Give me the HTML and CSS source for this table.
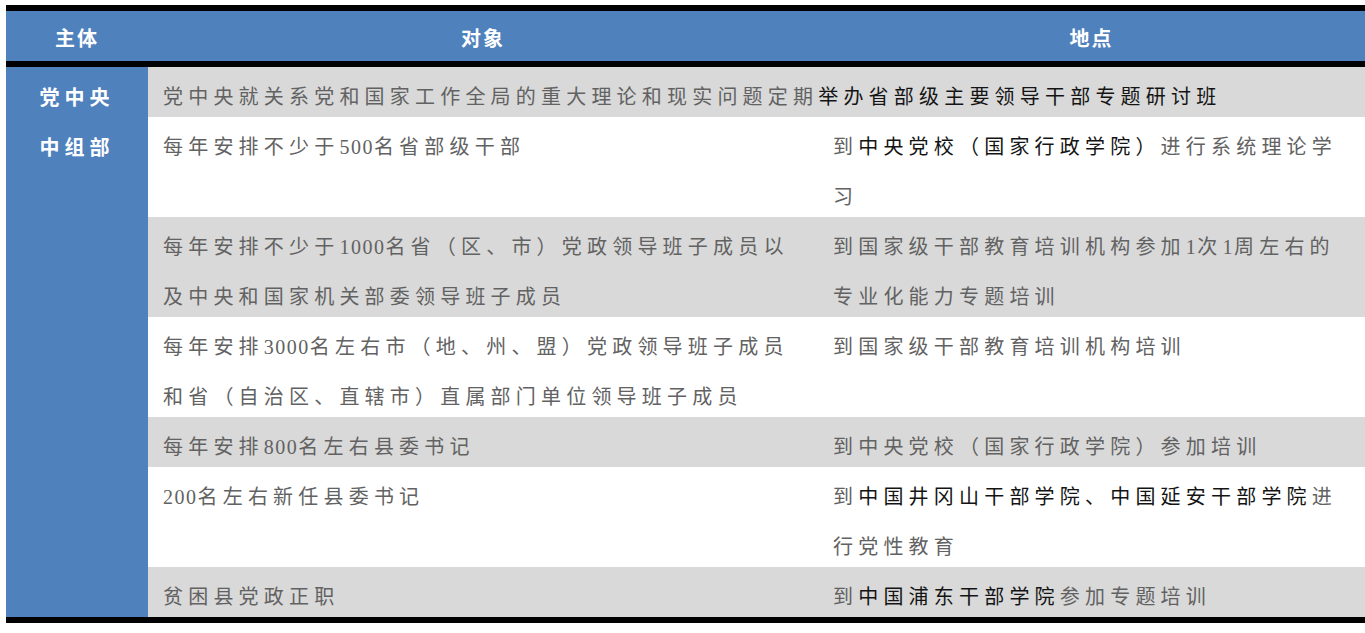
FILE: index.html
```html
<!DOCTYPE html>
<html lang="zh-CN">
<head>
<meta charset="utf-8">
<title>干部培训</title>
<link rel="stylesheet" href="styles.css">
</head>
<body>
<table class="tbl">
  <colgroup>
    <col class="c1">
    <col class="c2">
    <col class="c3">
  </colgroup>
  <thead>
    <tr class="head">
      <th>主体</th>
      <th>对象</th>
      <th>地点</th>
    </tr>
  </thead>
  <tbody>
    <tr class="gray">
      <td class="subject" rowspan="7"><div class="in">党中央<br>中组部</div></td>
      <td colspan="2"><div class="in">党中央就关系党和国家工作全局的重大理论和现实问题定期<b>举办省部级主要领导干部专题研讨班</b></div></td>
    </tr>
    <tr class="white">
      <td><div class="in">每年安排不少于<span class="num">500</span>名省部级干部</div></td>
      <td><div class="in">到<b>中央党校（国家行政学院）</b>进行系统理论学<br>习</div></td>
    </tr>
    <tr class="gray">
      <td><div class="in">每年安排不少于<span class="num">1000</span>名省（区、市）党政领导班子成员以<br>及中央和国家机关部委领导班子成员</div></td>
      <td><div class="in">到国家级干部教育培训机构参加<span class="num">1</span>次<span class="num">1</span>周左右的<br>专业化能力专题培训</div></td>
    </tr>
    <tr class="white">
      <td><div class="in">每年安排<span class="num">3000</span>名左右市（地、州、盟）党政领导班子成员<br>和省（自治区、直辖市）直属部门单位领导班子成员</div></td>
      <td><div class="in">到国家级干部教育培训机构培训</div></td>
    </tr>
    <tr class="gray">
      <td><div class="in">每年安排<span class="num">800</span>名左右县委书记</div></td>
      <td><div class="in">到中央党校（国家行政学院）参加培训</div></td>
    </tr>
    <tr class="white">
      <td><div class="in"><span class="num">200</span>名左右新任县委书记</div></td>
      <td><div class="in">到<b>中国井冈山干部学院、中国延安干部学院</b>进<br>行党性教育</div></td>
    </tr>
    <tr class="gray">
      <td><div class="in">贫困县党政正职</div></td>
      <td><div class="in">到<b>中国浦东干部学院</b>参加专题培训</div></td>
    </tr>
  </tbody>
</table>
</body>
</html>
```

FILE: styles.css
```css
html, body {
  margin: 0;
  padding: 0;
  background: #ffffff;
}

.tbl {
  margin: 5px 0 0 6px;
  width: 1359px;
  border-collapse: collapse;
  table-layout: fixed;
  font-family: "Liberation Serif", "Noto Sans CJK SC", serif;
  font-size: 20px;
  border-top: 6px solid #000;
  border-bottom: 6px solid #000;
}

.c1 { width: 142px; }
.c2 { width: 670px; }
.c3 { width: 547px; }

.head th {
  background: #4f81bd;
  color: #ffffff;
  font-weight: bold;
  height: 46px;
  padding: 4px 0 0 0;
  line-height: 46px;
  letter-spacing: 2px;
  text-align: center;
  border-bottom: 6px solid #000;
  font-family: "Noto Sans CJK SC", sans-serif;
  font-size: 20px;
}

.tbl td {
  vertical-align: top;
  padding: 0 8px 0 15px;
  color: #626262;
  letter-spacing: 5.2px;
  white-space: nowrap;
}

.in {
  line-height: 50px;
  margin: 5px 0 -5px 0;
}

.tbl td.subject {
  background: #4f81bd;
  color: #ffffff;
  font-weight: bold;
  text-align: center;
  padding: 0;
  letter-spacing: 5px;
  font-family: "Noto Sans CJK SC", sans-serif;
}

.gray td { background: #d9d9d9; }
.white td { background: #ffffff; }

.num {
  letter-spacing: 1.5px;
}

.tbl b {
  font-weight: normal;
  color: #141414;
}
```
